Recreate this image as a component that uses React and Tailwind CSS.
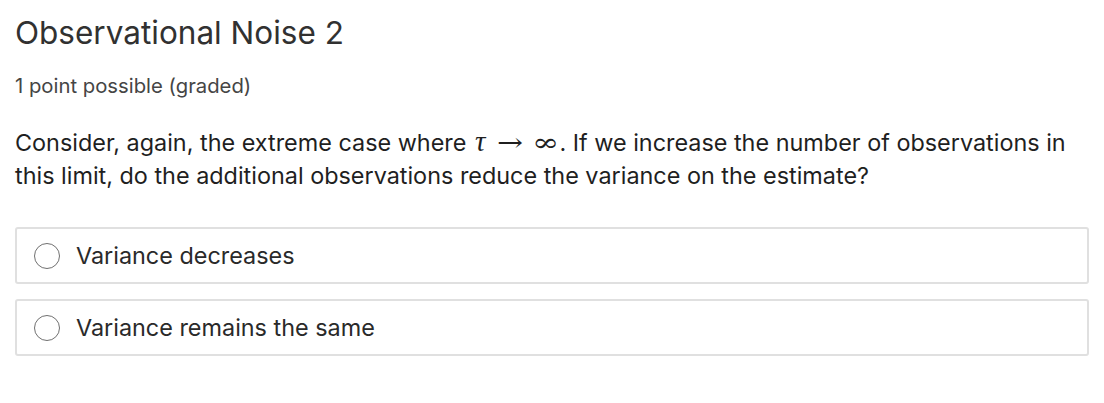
const options = ['Variance decreases', 'Variance remains the same'];

const App = () => {
  return (
    <div className="min-h-[403px] w-[1104px] bg-white px-[15px] pt-[14px] font-['Inter',sans-serif] text-[#313131]">
      <h2 className="text-[31.5px] leading-[38px] font-normal">Observational Noise 2</h2>
      <div className="mt-[21px] text-[20.3px] leading-[26px] text-[#454545]">1 point possible (graded)</div>

      <p className="mt-[27px] pr-[10px] text-[23.4px] leading-[33px] text-[#1f1f1f]">
        Consider, again, the extreme case where{' '}
        <span className="font-['DejaVu_Serif',serif] text-[25px] leading-none">
          <i className="ml-[2px] font-['Liberation_Serif',serif] text-[29px]">τ</i>
          <span className="ml-[12px] mr-[9px] inline-block w-[26px] scale-x-[1.25] text-center">→</span>
          <span className="inline-block w-[27px] origin-left scale-x-[1.3] text-left">∞</span>
        </span>
        . If we increase the number of observations in this limit, do the additional observations reduce the variance on the estimate?
      </p>

      <div className="mt-[35px] flex flex-col gap-[15px]">
        {options.map((o) => (
          <label
            key={o}
            className="flex h-[57px] items-center rounded-[3px] border-2 border-[#e0e0e0] pl-[17px] text-[23.4px] text-[#2a2a2a]"
          >
            <span className="h-[26px] w-[26px] shrink-0 rounded-full border-[1.5px] border-[#707070] bg-white" />
            <span className="ml-[16px]">{o}</span>
          </label>
        ))}
      </div>
    </div>
  );
};

export default App;
